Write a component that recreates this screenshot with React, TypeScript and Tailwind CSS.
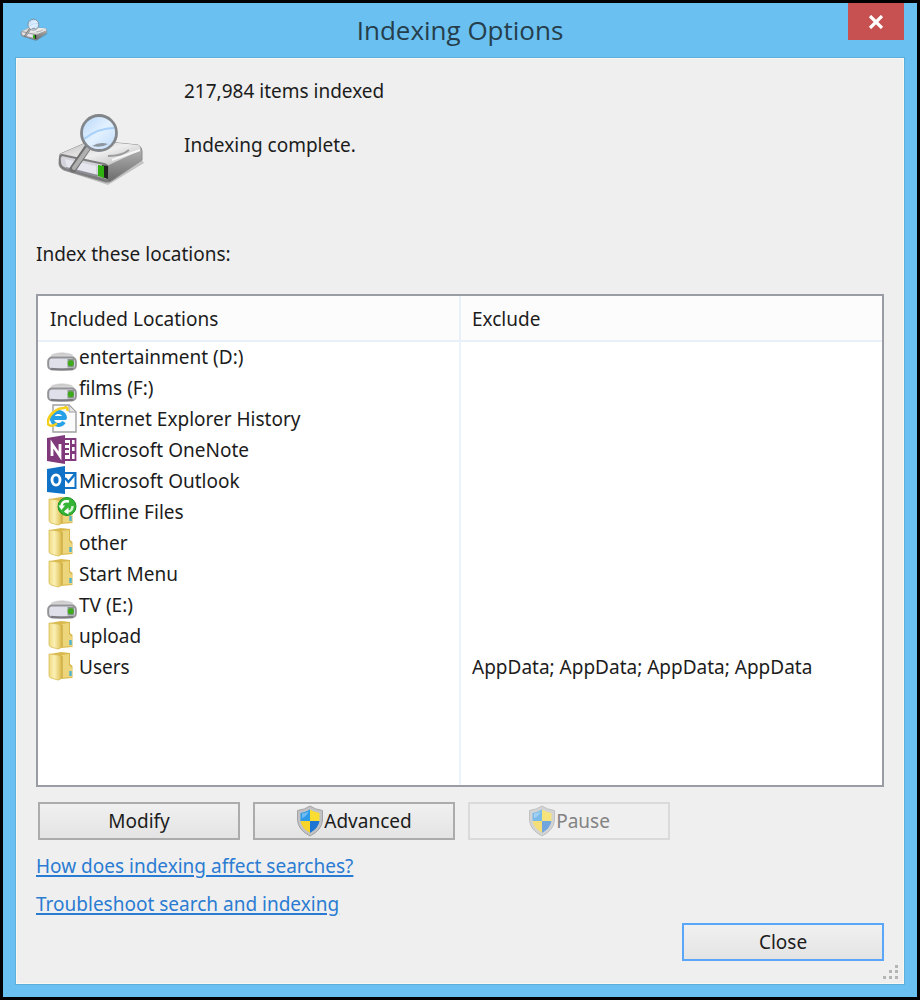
import type { ReactNode } from "react";

function SearchDriveIcon({ className }: { className: string }) {
  return (
    <svg viewBox="0 0 90 74" className={className} aria-hidden="true">
      <defs>
        <linearGradient id="sd-top" x1="0" y1="0" x2="1" y2="1">
          <stop offset="0" stopColor="#b9b9b9" />
          <stop offset="0.5" stopColor="#eeeeee" />
          <stop offset="1" stopColor="#b4b4b4" />
        </linearGradient>
        <linearGradient id="sd-side" x1="0" y1="0" x2="0" y2="1">
          <stop offset="0" stopColor="#c4c4c4" />
          <stop offset="1" stopColor="#6a6a6a" />
        </linearGradient>
        <linearGradient id="sd-lens" x1="0" y1="0" x2="1" y2="1">
          <stop offset="0" stopColor="#b5d6fa" />
          <stop offset="0.5" stopColor="#e3f1ff" />
          <stop offset="1" stopColor="#bcdafa" />
        </linearGradient>
      </defs>
      <path d="M6 57 L52 72 L88 50 L84 44 L52 66 Z" fill="#000" opacity="0.18" />
      <path d="M4 41 L34 28 Q38 27 42 28 L82 32 Q86 34 86 38 L86 47 L57 67 Q54 70 49 69 L8 57 Q3 55 3 50 Z" fill="url(#sd-side)" stroke="#8d8d8d" />
      <path d="M4 41 L34 28 Q38 27 42 28 L82 32 Q86 34 83 38 L55 51 Q52 53 48 52 L6 43 Z" fill="url(#sd-top)" />
      <path d="M56 47 L84 37" stroke="#f7f7f7" strokeWidth="2" />
      <path d="M52 43 Q66 43 73 37" fill="none" stroke="#9c9c9c" strokeWidth="2" />
      <path d="M6 42 L48 51 Q52 52 52 56 L51 67 L10 56 Q4 54 4 49 Q3 43 6 42 Z" fill="#d3d3db" stroke="#7d7d7d" strokeWidth="2" />
      <path d="M9 46 L40 53 V62 L11 55 Z" fill="#e6e6ee" />
      <path d="M10 55 L42 63" stroke="#8f8f99" strokeWidth="2" />
      <path d="M46 52 L52 53 L52 66 L46 64 Z" fill="#222222" />
      <path d="M42 52 L48 53 L48 65 L42 63 Z" fill="#2fb010" />
      <path d="M32 34 L17 56" stroke="#707070" strokeWidth="7" strokeLinecap="round" />
      <path d="M33 34 L18 55" stroke="#b0b0b0" strokeWidth="4" strokeLinecap="round" />
      <circle cx="43" cy="20" r="17.5" fill="url(#sd-lens)" stroke="#82868b" strokeWidth="2.8" />
      <path d="M28 26 Q42 15 58 15" fill="none" stroke="#a6d0f9" strokeWidth="2" />
      <path d="M36 33 Q44 28 52 31 Q46 35 36 33" fill="#8d979f" />
    </svg>
  );
}

function DriveIcon() {
  return (
    <svg viewBox="0 0 30 30" className="block size-[30px]" aria-hidden="true">
      <defs>
        <linearGradient id="dr-top" x1="0" y1="0" x2="0" y2="1">
          <stop offset="0" stopColor="#c4c4c4" />
          <stop offset="1" stopColor="#eeeeee" />
        </linearGradient>
      </defs>
      <path d="M5 12.5 Q15 9 25 12.500 L28.500 18 L1.500 18 Z" fill="url(#dr-top)" stroke="#cfcfcf" strokeWidth="0.6" />
      <rect x="1.200" y="15.500" width="27.600" height="12" rx="4" fill="#dfe0ea" stroke="#929297" strokeWidth="2" />
      <path d="M4 26.800 Q15 28.300 26 26.800" fill="none" stroke="#7b7b80" strokeWidth="2" />
      <path d="M20.500 17 H27 V25.500 H20.500 Z" fill="#8b968d" />
      <circle cx="23.800" cy="21.200" r="3" fill="#3daa1c" />
    </svg>
  );
}

function ExplorerIcon() {
  return (
    <svg viewBox="0 0 30 30" className="block size-[30px]" aria-hidden="true">
      <path d="M6 1 H22 L29 8 V28 H6 Z" fill="#fbfbfb" stroke="#a0a0a0" strokeWidth="1.400" />
      <path d="M22 1 V8 H29 Z" fill="#e4e4e4" stroke="#a0a0a0" />
      <path d="M5.500 14 H18 A6.500 6.500 0 1 0 17 18" fill="none" stroke="#26a0e6" strokeWidth="4" strokeLinejoin="round" />
      <path d="M17 4 Q20 2 20.500 6 M17 4 Q9 4 3 12 Q-1 19 2 21 Q5 23 9 20" fill="none" stroke="#f4cf1c" strokeWidth="2.600" strokeLinecap="round" />
    </svg>
  );
}

function OneNoteIcon() {
  return (
    <svg viewBox="0 0 30 30" className="block size-[30px]" aria-hidden="true">
      <path d="M16 4 H24 V25 H16 Z" fill="#ffffff" stroke="#80397b" strokeWidth="2" />
      <path d="M24 4 H28.500 V10 H24 M24 11 H28.500 V17 H24 M24 18 H28.500 V25 H24 M18 9 H22 M18 14 H22 M18 19 H22" fill="none" stroke="#80397b" strokeWidth="1.800" />
      <path d="M0 3 L18 0 V29 L0 26 Z" fill="#80397b" />
      <path d="M5 21 V9 L13 21 V9" fill="none" stroke="#ffffff" strokeWidth="2.800" />
    </svg>
  );
}

function OutlookIcon() {
  return (
    <svg viewBox="0 0 30 30" className="block size-[30px]" aria-hidden="true">
      <path d="M16 7 H28.500 V22 H16 Z" fill="#ffffff" stroke="#0f72c6" strokeWidth="2" />
      <path d="M18 12 L21.500 16 L28 8" fill="none" stroke="#0f72c6" strokeWidth="2.400" />
      <path d="M0 3 L18 0 V28 L0 26 Z" fill="#0f72c6" />
      <ellipse cx="9" cy="14" rx="4" ry="5.200" fill="none" stroke="#ffffff" strokeWidth="2.800" />
    </svg>
  );
}

function FolderShape() {
  return (
    <>
      <defs>
        <linearGradient id="fo-front" x1="0" y1="0" x2="1" y2="0">
          <stop offset="0" stopColor="#eedb82" />
          <stop offset="0.450" stopColor="#fbf0b4" />
          <stop offset="1" stopColor="#dfc25a" />
        </linearGradient>
      </defs>
      <path d="M3 2 L14 0 L23 1 V12 L25.500 14 V26 L14 27 L3 25 Z" fill="#d9b94e" />
      <path d="M15 3 L22 2 V13 L25 16 V25 L13 26 Z" fill="#ecd57a" />
      <path d="M2 2 L11 3 Q14 3.500 14 6 V25 Q14 28 11 28 L4 26 Q2 25.500 2 23 Z" fill="url(#fo-front)" stroke="#d8bc57" strokeWidth="0.800" />
      <path d="M15 4 V26" stroke="#cdab42" strokeWidth="1.400" />
      <path d="M23.500 19 V24" stroke="#4fb2cf" strokeWidth="2.400" />
    </>
  );
}

function FolderIcon() {
  return (
    <svg viewBox="0 0 30 30" className="block size-[30px]" aria-hidden="true">
      <FolderShape />
    </svg>
  );
}

function OfflineIcon() {
  return (
    <svg viewBox="0 0 30 30" className="block size-[30px]" aria-hidden="true">
      <FolderShape />
      <circle cx="20" cy="9.500" r="9" fill="#35b535" stroke="#189024" />
      <path d="M22 4.500 Q14 3 14.500 11" fill="none" stroke="#ffffff" strokeWidth="2.400" />
      <path d="M11.500 8.500 H18 L14.500 13 Z" fill="#ffffff" />
      <path d="M18 14.500 Q25.500 15.500 25.500 9" fill="none" stroke="#d5f5d2" strokeWidth="2.400" />
      <path d="M17 14.500 L21.500 10.500 V17.500 Z" fill="#ffffff" />
    </svg>
  );
}

function ShieldIcon() {
  return (
    <svg viewBox="0 0 28 32" className="h-8 w-7" aria-hidden="true">
      <path d="M14 1 Q19 4.500 26.500 5.500 V15 Q26 25 14 31 Q2 25 1.500 15 V5.500 Q9 4.500 14 1 Z" fill="#c0c2c5" stroke="#a3a3a3" />
      <path d="M14 4.500 Q9 7.500 4.500 8 V16 H14 Z" fill="#2e9ae8" />
      <path d="M14 4.500 Q19 7.500 23.500 8 V16 H14 Z" fill="#fbdc30" />
      <path d="M4.500 16 H14 V28 Q5.500 23 4.500 16 Z" fill="#f8d42a" />
      <path d="M23.500 16 H14 V28 Q22.500 23 23.500 16 Z" fill="#1d75d3" />
      <path d="M6 8.500 Q10 8 13 6.500 Q9 13 6 13 Z" fill="#8ccbf8" opacity="0.700" />
    </svg>
  );
}

const locations: { name: string; icon: ReactNode; exclude?: string }[] = [
  { name: "entertainment (D:)", icon: <DriveIcon /> },
  { name: "films (F:)", icon: <DriveIcon /> },
  { name: "Internet Explorer History", icon: <ExplorerIcon /> },
  { name: "Microsoft OneNote", icon: <OneNoteIcon /> },
  { name: "Microsoft Outlook", icon: <OutlookIcon /> },
  { name: "Offline Files", icon: <OfflineIcon /> },
  { name: "other", icon: <FolderIcon /> },
  { name: "Start Menu", icon: <FolderIcon /> },
  { name: "TV (E:)", icon: <DriveIcon /> },
  { name: "upload", icon: <FolderIcon /> },
  { name: "Users", icon: <FolderIcon />, exclude: "AppData; AppData; AppData; AppData" },
];

const buttonBase = "flex h-[38px] w-[202px] items-center justify-center border-2";

export default function App() {
  return (
    <div className="flex min-h-screen flex-col border-[3px] border-black bg-[#69c0f1] px-[13px] pb-[13px] font-['Noto_Sans',sans-serif] text-[19px] leading-[30px] text-[#1c1c1c]">
      <header className="grid h-[55px] grid-cols-[56px_1fr_56px] items-start">
        <SearchDriveIcon className="mt-[15px] ml-1 h-6 w-7" />
        <h1 className="pt-[9px] text-center font-['Open_Sans',sans-serif] text-[26px] leading-[36px] text-[#263e4c]">Indexing Options</h1>
        <button aria-label="Close window" className="flex h-[37px] w-14 items-center justify-center bg-[#c75050]">
          <svg viewBox="0 0 16 14" className="h-[14px] w-4" aria-hidden="true">
            <path d="M2 1 L14 13 M14 1 L2 13" stroke="#ffffff" strokeWidth="3.200" />
          </svg>
        </button>
      </header>

      <main className="flex flex-1 flex-col border border-[#fbf8f4] bg-[#efefef] px-[19px] outline outline-[#5caedb]">
        <section className="flex">
          <SearchDriveIcon className="mt-[54px] ml-5 h-[74px] w-[90px]" />
          <div className="mt-[17px] ml-[38px] space-y-6">
            <p>217,984 items indexed</p>
            <p>Indexing complete.</p>
          </div>
        </section>
        <h2 className="mt-[52px]">Index these locations:</h2>

        <div className="mt-[25px] flex flex-1 flex-col border-2 border-[#9a9ca3] bg-white">
          <table className="w-full flex-1 table-fixed border-collapse text-left">
            <colgroup>
              <col className="w-1/2" />
              <col className="w-1/2" />
            </colgroup>
            <thead>
              <tr className="h-[45px] border-b-2 border-[#e8f1f9] bg-[#fcfcfc]">
                <th className="border-r-2 border-[#e8f1f9] pt-[2px] pl-3 font-normal">Included Locations</th>
                <th className="pt-[2px] pl-[11px] font-normal">Exclude</th>
              </tr>
            </thead>
            <tbody>
              {locations.map((item) => (
                <tr key={item.name} className="h-[31px]">
                  <td className="border-r-2 border-[#edf3fa] p-0 pl-[9px]">
                    <span className="flex items-center gap-[2px]">
                      {item.icon}
                      {item.name}
                    </span>
                  </td>
                  <td className="p-0 pl-[11px]">{item.exclude}</td>
                </tr>
              ))}
              <tr>
                <td className="border-r-2 border-[#edf3fa]" />
                <td />
              </tr>
            </tbody>
          </table>
        </div>

        <div className="mt-[15px] flex gap-[13px] pl-[2px]">
          <button className={`${buttonBase} border-[#acacac] bg-linear-to-b from-[#f0f0f0] to-[#e4e4e4]`}>Modify</button>
          <button className={`${buttonBase} border-[#acacac] bg-linear-to-b from-[#f0f0f0] to-[#e4e4e4]`}>
            <ShieldIcon />
            Advanced
          </button>
          <button disabled className={`${buttonBase} border-[#dadada] bg-[#efefef] text-[#838383]`}>
            <span className="opacity-60"><ShieldIcon /></span>
            Pause
          </button>
        </div>

        <nav className="mt-[7px] flex flex-col items-start leading-[38px] text-[#2a7cd3] underline decoration-2 underline-offset-2">
          <a href="#affect">How does indexing affect searches?</a>
          <a href="#troubleshoot">Troubleshoot search and indexing</a>
        </nav>

        <div className="flex justify-end">
          <button className={`${buttonBase} border-[#5aa7fa] bg-linear-to-b from-[#f0f0f0] to-[#e4e4e4]`}>Close</button>
        </div>
        <svg viewBox="0 0 16 16" className="mt-1 -mr-[15px] mb-[2px] size-4 self-end" fill="#b5b5b5" aria-hidden="true">
          <path d="M12 0h3v3h-3z M12 5h3v3h-3z M12 11h3v3h-3z M6 5h3v3h-3z M6 11h3v3h-3z M0 11h3v3h-3z" />
        </svg>
      </main>
    </div>
  );
}
